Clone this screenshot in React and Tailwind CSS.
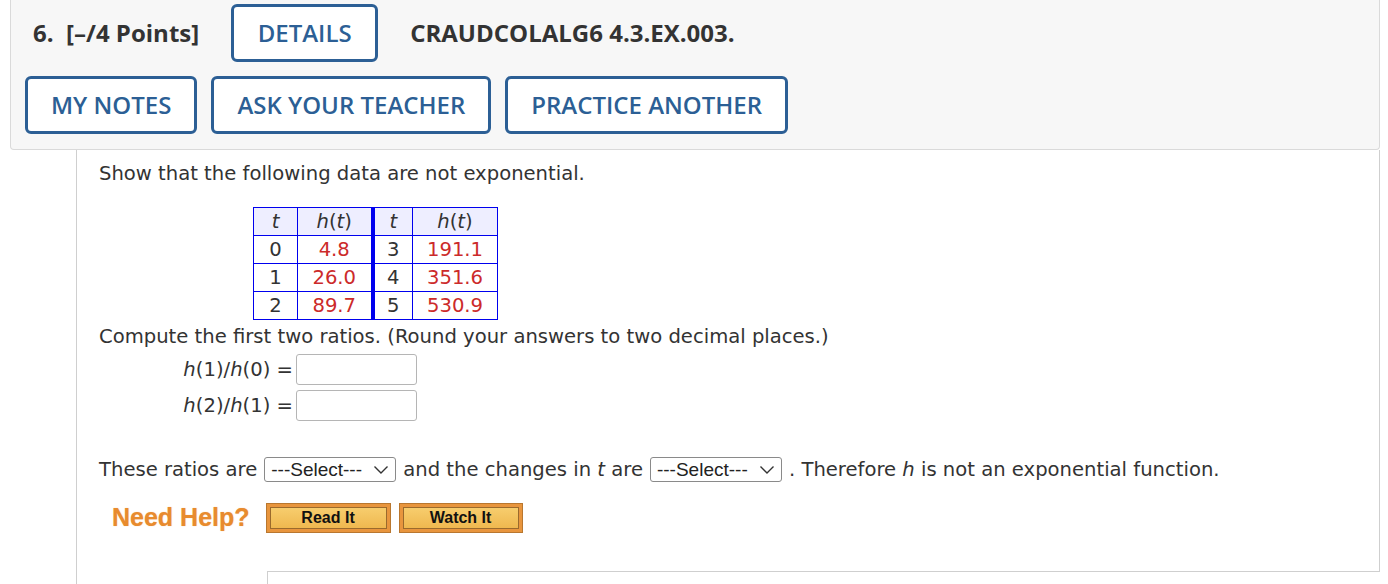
import React from 'react';

const verdana = { fontFamily: '"DejaVu Sans", Verdana, sans-serif' };

function BlueButton({ children }) {
  return (
    <div className="h-[58px] px-[23px] flex items-center border-[3px] border-[#2c5f95] rounded-[6px] text-[#2c5f95] text-[24px] font-semibold bg-white">
      {children}
    </div>
  );
}

function HelpButton({ children, w }) {
  return (
    <div className={`h-[30px] ${w} border border-[#b9772f] bg-[#e8953d] p-[3px]`}>
      <div className="h-full border border-[#9b6a2c] bg-gradient-to-b from-[#f7cd6d] to-[#efb84f] flex items-center justify-center text-[16px] font-bold text-[#111]" style={{ fontFamily: '"Liberation Sans", Arial, sans-serif' }}>
        {children}
      </div>
    </div>
  );
}

function Select() {
  return (
    <span className="inline-flex items-center h-[25px] w-[132px] border border-[#8a8a8a] rounded-[3px] bg-white pl-[6px] pr-[6px] justify-between text-[19px] leading-[23px] text-[#222]" style={{ fontFamily: '"Liberation Sans", Arial, sans-serif' }}>
      <span>---Select---</span>
      <svg width="16" height="10" viewBox="0 0 16 10" fill="none" stroke="#333" strokeWidth="1.4">
        <path d="M1.5 1.5 L8 8 L14.5 1.5" />
      </svg>
    </span>
  );
}

function Ratio({ num, den }) {
  return (
    <div className="flex items-center h-[31px]">
      <span className="w-[118px] text-right pr-[3px] whitespace-nowrap">
        <i>h</i>({num})/<i>h</i>({den}) =
      </span>
      <div className="w-[121px] h-[31px] border border-[#b5b5b5] rounded-[3px] bg-white" />
    </div>
  );
}

const rows = [
  ['0', '4.8', '3', '191.1'],
  ['1', '26.0', '4', '351.6'],
  ['2', '89.7', '5', '530.9'],
];

export default function App() {
  return (
    <div className="w-[1388px] h-[584px] bg-white overflow-hidden pl-[10px] pr-[8px]">
      <div className="h-[150px] bg-[#f7f7f7] border-l border-r border-b border-[#dadada] rounded-b-[4px] pl-[14px] pt-[4px]" style={{ fontFamily: '"Open Sans", sans-serif' }}>
        <div className="flex items-center pl-[8px] h-[58px]">
          <span className="text-[24px] font-bold text-[#333] whitespace-pre">6.  [–/4 Points]</span>
          <div className="ml-[32px] h-[58px] w-[147px] flex items-center justify-center border-[3px] border-[#2c5f95] rounded-[6px] text-[#2c5f95] text-[24px] font-semibold bg-white">
            DETAILS
          </div>
          <span className="ml-[32px] text-[24px] font-bold text-[#333]">CRAUDCOLALG6 4.3.EX.003.</span>
        </div>
        <div className="flex gap-[14px] mt-[14px]">
          <BlueButton>MY NOTES</BlueButton>
          <BlueButton>ASK YOUR TEACHER</BlueButton>
          <BlueButton>PRACTICE ANOTHER</BlueButton>
        </div>
      </div>

      <div className="ml-[66px] border-l border-[#cfcfcf] h-[434px] flex flex-col">
        <div className="flex-1 border-r border-[#cfcfcf] pl-[22px] pt-[13px] text-[19.6px] text-[#333]" style={verdana}>
          <p className="leading-[22px]">Show that the following data are not exponential.</p>
          <table className="ml-[154px] mt-[22px] border-collapse text-center text-[19.6px] leading-[26px]">
            <thead>
              <tr className="bg-[#eeeeff] h-[28px]">
                <th className="font-normal border border-[#0000ee] w-[44px]"><i>t</i></th>
                <th className="font-normal border border-[#0000ee] border-r-[4px] w-[75px]"><i>h</i>(<i>t</i>)</th>
                <th className="font-normal border border-[#0000ee] w-[40px]"><i>t</i></th>
                <th className="font-normal border border-[#0000ee] w-[85px]"><i>h</i>(<i>t</i>)</th>
              </tr>
            </thead>
            <tbody>
              {rows.map((r) => (
                <tr key={r[0]} className="h-[28px]">
                  <td className="border border-[#0000ee]">{r[0]}</td>
                  <td className="border border-[#0000ee] border-r-[4px] text-[#cc2a2a]">{r[1]}</td>
                  <td className="border border-[#0000ee]">{r[2]}</td>
                  <td className="border border-[#0000ee] text-[#cc2a2a]">{r[3]}</td>
                </tr>
              ))}
            </tbody>
          </table>
          <p className="leading-[22px] mt-[6px]">Compute the first two ratios. (Round your answers to two decimal places.)</p>
          <div className="ml-[79px] mt-[6px] flex flex-col gap-[5px]">
            <Ratio num="1" den="0" />
            <Ratio num="2" den="1" />
          </div>
          <div className="mt-[36px] flex items-center gap-[7px] h-[25px] whitespace-nowrap">
            <span>These ratios are</span>
            <Select />
            <span>and the changes in <i>t</i> are</span>
            <Select />
            <span>. Therefore <i>h</i> is not an exponential function.</span>
          </div>
          <div className="mt-[17px] ml-[13px] flex items-center">
            <span className="text-[25px] font-bold text-[#e88b2e] mr-[16px]" style={{ fontFamily: '"Liberation Sans", Arial, sans-serif', textShadow: '0 0 1px rgba(232,139,46,0.6)' }}>Need Help?</span>
            <HelpButton w="w-[125px]">Read It</HelpButton>
            <div className="w-[8px]" />
            <HelpButton w="w-[124px]">Watch It</HelpButton>
          </div>
        </div>
        <div className="flex h-[13px]">
          <div className="w-[190px]" />
          <div className="flex-1 border-t border-l border-[#cfcfcf]" />
        </div>
      </div>
    </div>
  );
}
